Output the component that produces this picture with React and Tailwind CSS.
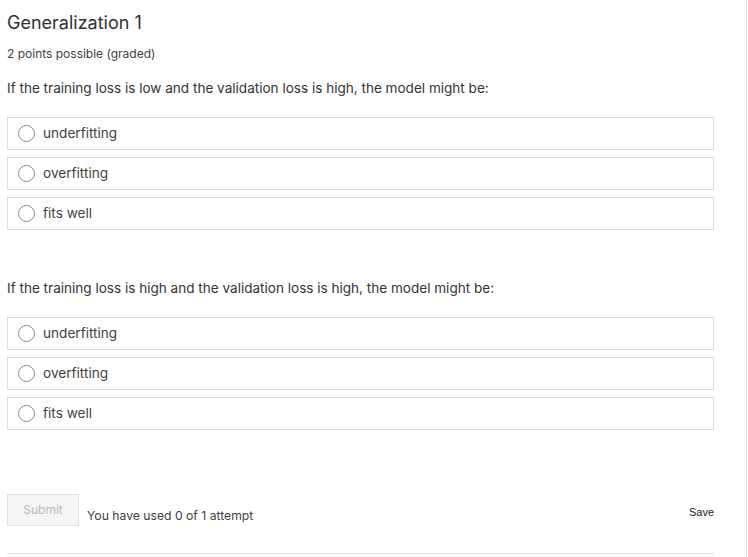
import React from 'react';

const options = ['underfitting', 'overfitting', 'fits well'];

const Option = ({ label }) => (
  <label className="flex items-center h-[33px] border border-[#dcdcdc] pl-[10px] bg-white">
    <span className="w-[17px] h-[17px] rounded-full border border-[#8a8a8a] bg-white shrink-0" />
    <span className="ml-[8px] text-[13.6px] text-[#414141]">{label}</span>
  </label>
);

const Question = ({ text, className }) => (
  <div className={className}>
    <p className="text-[13.55px] text-[#333] leading-[20px]">{text}</p>
    <div className="mt-[19px] flex flex-col gap-[7px]">
      {options.map((o) => (
        <Option key={o} label={o} />
      ))}
    </div>
  </div>
);

export default function App() {
  return (
    <div className="w-[748px] h-[557px] bg-white overflow-hidden font-['Inter',sans-serif]">
      <div className="w-[747px] h-full border-r border-[#e4e4e4] pl-[7px] pr-[32px] pt-[11px]">
        <h2 className="text-[18px] leading-[24px] text-[#313131]">Generalization 1</h2>
        <div className="mt-[11px] text-[12px] leading-[16px] text-[#414141]">2 points possible (graded)</div>
        <Question
          className="mt-[16px]"
          text="If the training loss is low and the validation loss is high, the model might be:"
        />
        <Question
          className="mt-[48px]"
          text="If the training loss is high and the validation loss is high, the model might be:"
        />
        <div className="mt-[64px] flex items-start">
          <button className="w-[72px] h-[32px] border border-[#e2e2e2] bg-[#f5f5f5] text-[12px] text-[#b9b9b9]">
            Submit
          </button>
          <span className="ml-[8px] mt-[13px] text-[12.2px] text-[#414141]">You have used 0 of 1 attempt</span>
          <span className="ml-auto mt-[10px] text-[11px] text-[#222] font-['Liberation_Sans',sans-serif]">Save</span>
        </div>
        <div className="mt-[27px] h-px bg-[#dcdcdc]" />
      </div>
    </div>
  );
}
